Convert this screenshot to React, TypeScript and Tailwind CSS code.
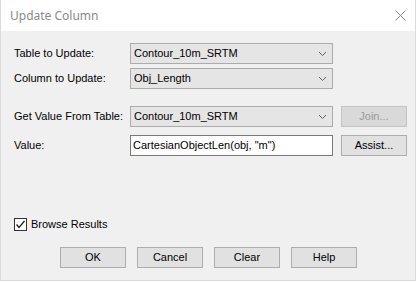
import React from "react"

const font = { fontFamily: '"Liberation Sans", Arial, sans-serif' }

function Chevron() {
  return (
    <svg width="9" height="6" viewBox="0 0 9 6" className="shrink-0">
      <path d="M1 1 L4.5 4.5 L8 1" fill="none" stroke="#606060" strokeWidth="1" />
    </svg>
  )
}

function Combo({ value }: { value: string }) {
  return (
    <div className="flex items-center justify-between w-[203px] h-[21px] bg-[#e5e5e5] border border-[#acacac] pl-[3px] pr-[5px] text-[11px] text-black">
      <span>{value}</span>
      <Chevron />
    </div>
  )
}

function Btn({ label, disabled = false }: { label: string; disabled?: boolean }) {
  return (
    <button
      className={`w-[66px] h-[21px] flex items-center justify-center text-[11px] border ${
        disabled ? "bg-[#d9d9d9] border-[#c4c4c4] text-[#9a9a9a]" : "bg-[#e1e1e1] border-[#adadad] text-black"
      }`}
    >
      {label}
    </button>
  )
}

function Row({ label, children, className = "" }: { label: string; children: React.ReactNode; className?: string }) {
  return (
    <div className={`flex items-center ${className}`}>
      <div className="w-[116px] text-[11px] text-black">{label}</div>
      {children}
    </div>
  )
}

export default function App() {
  return (
    <div className="w-[419px] h-[282px] bg-white" style={font}>
      <div className="w-[416px] h-[281px] flex flex-col border-l border-r border-b border-[#dadada]">
        <div className="h-[31px] flex items-center justify-between pl-[9px] pr-[9px] bg-white">
          <span className="text-[12px] text-[#8a8a8a]" style={{ fontFamily: '"Noto Sans", "Open Sans", sans-serif' }}>
            Update Column
          </span>
          <svg width="11" height="11" viewBox="0 0 11 11">
            <path d="M0.5 0.5 L10.5 10.5 M10.5 0.5 L0.5 10.5" stroke="#8a8a8a" strokeWidth="1" />
          </svg>
        </div>
        <div className="flex-1 bg-[#f0f0f0] pl-[13px] pt-[12px] flex flex-col">
          <Row label="Table to Update:">
            <Combo value="Contour_10m_SRTM" />
          </Row>
          <Row label="Column to Update:" className="mt-[4px]">
            <Combo value="Obj_Length" />
          </Row>
          <Row label="Get Value From Table:" className="mt-[17px]">
            <Combo value="Contour_10m_SRTM" />
            <div className="ml-[8px]">
              <Btn label="Join..." disabled />
            </div>
          </Row>
          <Row label="Value:" className="mt-[8px]">
            <div className="w-[203px] h-[21px] bg-white border border-[#7a7a7a] pl-[2px] flex items-center text-[11px] text-black">
              CartesianObjectLen(obj, "m")
            </div>
            <div className="ml-[8px]">
              <Btn label="Assist..." />
            </div>
          </Row>
          <div className="mt-[60px] h-[16px] flex items-center gap-[4px] text-[11px] text-black">
            <div className="w-[13px] h-[13px] bg-white border border-[#333333] flex items-center justify-center">
              <svg width="11" height="11" viewBox="0 0 11 11">
                <path d="M1.5 5.5 L4 8.5 L9.5 2" fill="none" stroke="#222222" strokeWidth="1.3" />
              </svg>
            </div>
            <span>Browse Results</span>
          </div>
          <div className="mt-[15px] ml-[46px] flex gap-[11px]">
            <Btn label="OK" />
            <Btn label="Cancel" />
            <Btn label="Clear" />
            <Btn label="Help" />
          </div>
        </div>
      </div>
    </div>
  )
}
